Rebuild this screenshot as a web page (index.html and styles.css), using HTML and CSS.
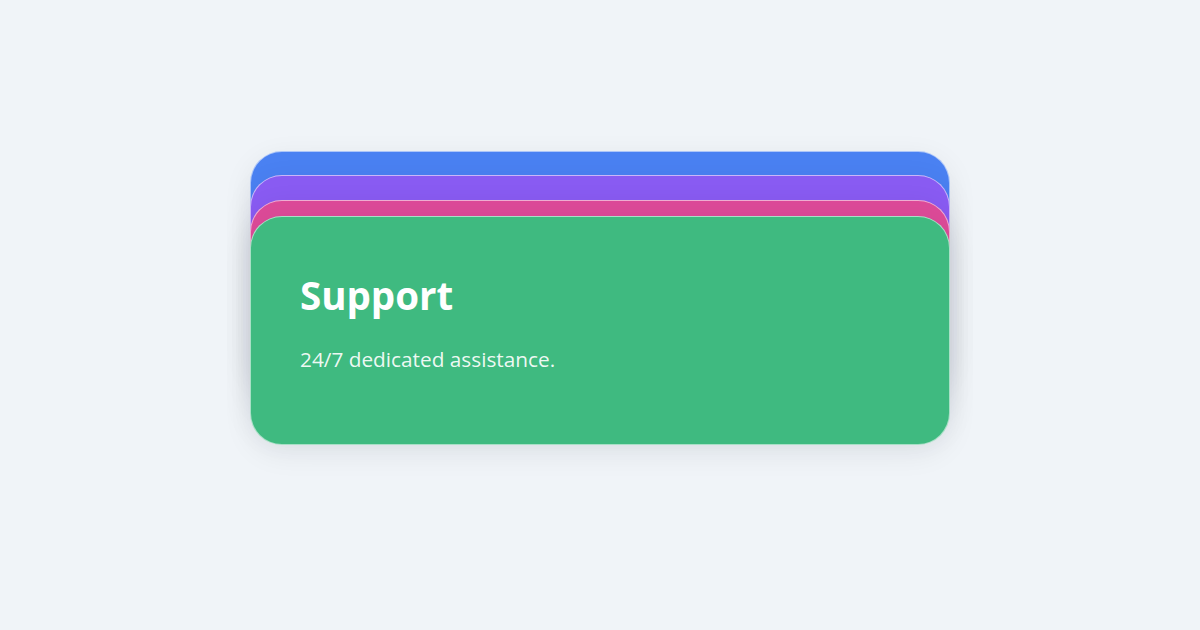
FILE: index.html
```html
<!DOCTYPE html>
<html lang="en">
<head>
<meta charset="utf-8">
<title>Card stack</title>
<link rel="stylesheet" href="styles.css">
</head>
<body>
  <main class="page">
    <div class="stack">
      <div class="card card-blue"></div>
      <div class="card card-purple"></div>
      <div class="card card-pink"></div>
      <div class="card card-green">
        <h2 class="card-title">Support</h2>
        <p class="card-text">24/7 dedicated assistance.</p>
      </div>
    </div>
  </main>
</body>
</html>
```

FILE: styles.css
```css
html, body {
  margin: 0;
  padding: 0;
}
body {
  background: #f0f4f8;
  font-family: "Open Sans", "Noto Sans", "Liberation Sans", sans-serif;
  width: 1200px;
  height: 630px;
  overflow: hidden;
}
.page {
  display: flex;
  justify-content: center;
  padding-top: 151px;
}
.stack {
  display: grid;
  width: 700px;
}
.card {
  grid-area: 1 / 1;
  box-sizing: border-box;
  height: 229px;
  border-radius: 32px;
  border: 1px solid rgba(255, 255, 255, 0.55);
  box-shadow: 0 8px 30px rgba(15, 23, 42, 0.07);
}
.card-blue {
  background: #4a81f2;
  margin-top: 0;
}
.card-purple {
  background: #895bf2;
  margin-top: 24px;
}
.card-pink {
  background: #dc4a98;
  margin-top: 49px;
}
.card-green {
  background: #3fba80;
  margin-top: 65px;
  padding: 54px 49px 0;
  color: #ffffff;
}
.card-title {
  margin: 0;
  font-size: 38.5px;
  font-weight: 700;
  line-height: 48px;
}
.card-text {
  margin: 26px 0 0;
  font-size: 20.8px;
  line-height: 28px;
  color: rgba(255, 255, 255, 0.92);
}
```
